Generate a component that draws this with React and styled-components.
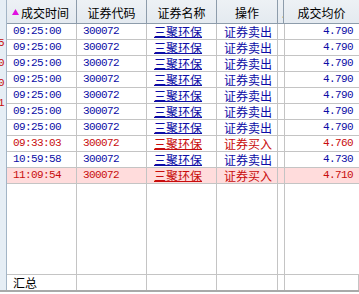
import React from "react";
import styled, { createGlobalStyle } from "styled-components";

const GlobalStyle = createGlobalStyle`
  html, body { margin: 0; padding: 0; background: #ffffff; }
  * { box-sizing: border-box; }
`;

const BLUE = "#0c0ca6";
const RED = "#c80c0c";
const GRID = "#c4c4c4";
const HEAD_LINE = "#8d9cab";
const COLS = "70px 70px 70px 61px 6px 75px";

const Page = styled.div`
  display: flex;
  width: 359px;
  height: 292px;
  border-bottom: 2px solid #a9a9a9;
  background: #ffffff;
`;

const Strip = styled.div`
  width: 7px;
  flex: none;
  height: 100%;
  background: #e6eef5;
  border-right: 1px solid #a3b5c6;
  overflow: hidden;
  display: flex;
  flex-direction: column;
  align-items: flex-end;
  padding: 33px 2px 0 0;
`;

const StripDigit = styled.div`
  white-space: nowrap;
  font-family: "Liberation Mono", monospace;
  font-size: 11px;
  line-height: 20px;
  letter-spacing: -0.6px;
  color: ${RED};
`;

const Table = styled.div`
  flex: 1;
  display: flex;
  flex-direction: column;
  min-width: 0;
`;

const HeaderRow = styled.div`
  display: grid;
  grid-template-columns: ${COLS};
  height: 24px;
  background: linear-gradient(#edf1f5, #e4eaf0);
  border-bottom: 1px solid ${HEAD_LINE};
`;

const HeadCell = styled.div`
  display: flex;
  align-items: center;
  justify-content: ${(p) => (p.$align === "left" ? "flex-start" : "center")};
  gap: 2px;
  padding: 2px 0 0 ${(p) => (p.$align === "left" ? "4px" : "0")};
  border-right: ${(p) => (p.$last ? "none" : `1px solid ${HEAD_LINE}`)};
  font-family: "Noto Sans CJK SC", sans-serif;
  font-size: 12px;
  line-height: 14px;
  color: #000000;
  overflow: hidden;
  white-space: nowrap;
`;

const SortMark = styled.svg`
  width: 7px;
  height: 6px;
  flex: none;
  margin: -1px 0 0 1px;
`;

const Row = styled.div`
  display: grid;
  grid-template-columns: ${COLS};
  height: ${(p) => p.$h || 16}px;
  border-bottom: ${(p) => (p.$foot ? "none" : `1px solid ${GRID}`)};
  background: ${(p) => (p.$hl ? "#ffdcdc" : "transparent")};
  color: ${(p) => (p.$tone === "red" ? RED : p.$tone === "black" ? "#000" : BLUE)};
`;

const Cell = styled.div`
  display: flex;
  align-items: center;
  justify-content: ${(p) => (p.$right ? "flex-end" : "flex-start")};
  padding: ${(p) => (p.$right ? "0 6px 0 0" : p.$pad ? `0 0 0 ${p.$pad}px` : "0 0 0 6px")};
  border-right: ${(p) => (p.$last && !p.$edge ? "none" : `1px solid ${GRID}`)};
  white-space: nowrap;
  overflow: hidden;
  font-family: ${(p) =>
    p.$num ? '"Liberation Mono", monospace' : '"Noto Sans CJK SC", sans-serif'};
  font-size: ${(p) => (p.$num ? "11px" : "12px")};
  letter-spacing: ${(p) => (p.$num ? "-0.6px" : "0")};
  line-height: 15px;
  text-decoration: ${(p) => (p.$link ? "underline" : "none")};
  text-underline-offset: 0px;
`;

const rows = [
  ["09:25:00", "300072", "三聚环保", "证券卖出", "4.790", "blue"],
  ["09:25:00", "300072", "三聚环保", "证券卖出", "4.790", "blue"],
  ["09:25:00", "300072", "三聚环保", "证券卖出", "4.790", "blue"],
  ["09:25:00", "300072", "三聚环保", "证券卖出", "4.790", "blue"],
  ["09:25:00", "300072", "三聚环保", "证券卖出", "4.790", "blue"],
  ["09:25:00", "300072", "三聚环保", "证券卖出", "4.790", "blue"],
  ["09:25:00", "300072", "三聚环保", "证券卖出", "4.790", "blue"],
  ["09:33:03", "300072", "三聚环保", "证券买入", "4.760", "red"],
  ["10:59:58", "300072", "三聚环保", "证券卖出", "4.730", "blue"],
  ["11:09:54", "300072", "三聚环保", "证券买入", "4.710", "red", true],
];

export default function App() {
  return (
    <>
      <GlobalStyle />
      <Page>
        <Strip>
          <StripDigit>4.795</StripDigit>
          <StripDigit>4.790</StripDigit>
          <StripDigit>4.780</StripDigit>
          <StripDigit>4.771</StripDigit>
        </Strip>
        <Table>
          <HeaderRow>
            <HeadCell $align="left">
              <SortMark viewBox="0 0 7 6">
                <polygon points="3.5,0 7,6 0,6" fill="#e010e0" />
              </SortMark>
              成交时间
            </HeadCell>
            <HeadCell>证券代码</HeadCell>
            <HeadCell>证券名称</HeadCell>
            <HeadCell>操作</HeadCell>
            <HeadCell $align="left">.</HeadCell>
            <HeadCell $last>成交均价</HeadCell>
          </HeaderRow>
          {rows.map((r, i) => (
            <Row key={i} $tone={r[5]} $hl={r[6]}>
              <Cell $num>{r[0]}</Cell>
              <Cell $num>{r[1]}</Cell>
              <Cell $link $pad={7}>{r[2]}</Cell>
              <Cell $pad={7}>{r[3]}</Cell>
              <Cell />
              <Cell $num $right $last>{r[4]}</Cell>
            </Row>
          ))}
          <Row $h={91}>
            <Cell />
            <Cell />
            <Cell />
            <Cell />
            <Cell />
            <Cell $last />
          </Row>
          <Row $h={15} $foot $tone="black">
            <Cell>汇总</Cell>
            <Cell />
            <Cell />
            <Cell />
            <Cell />
            <Cell $last $edge />
          </Row>
        </Table>
      </Page>
    </>
  );
}
